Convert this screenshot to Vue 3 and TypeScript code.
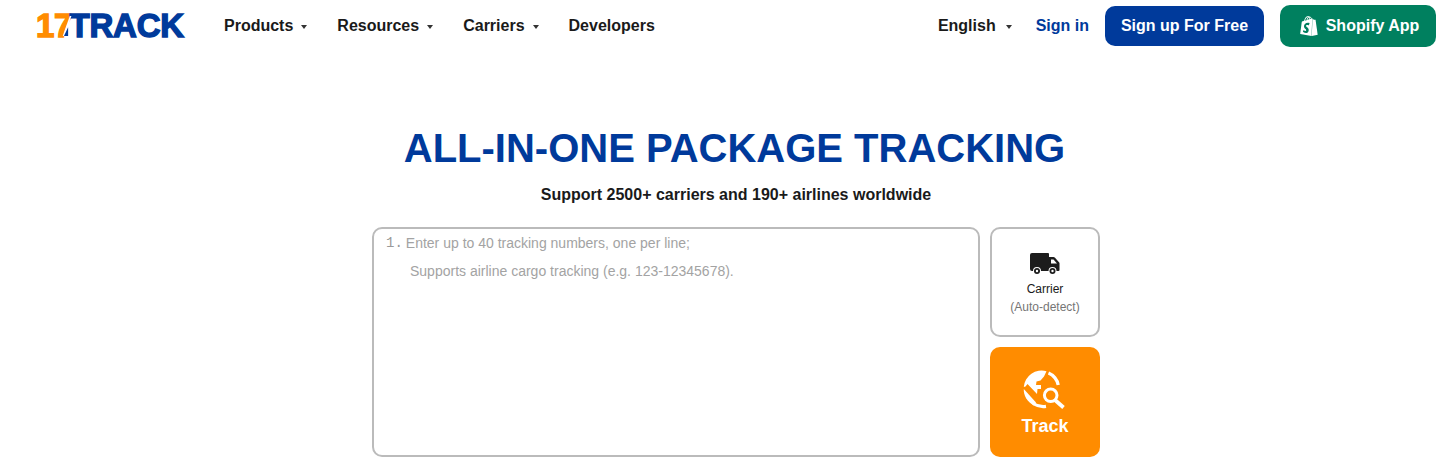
<script setup lang="ts">
const navItems: { label: string; caret: boolean }[] = [
  { label: 'Products', caret: true },
  { label: 'Resources', caret: true },
  { label: 'Carriers', caret: true },
  { label: 'Developers', caret: false },
]
</script>

<template>
  <div class="page">
    <header class="header">
      <a class="logo"><span class="l17">17</span><svg class="slash" width="15" height="24" viewBox="0 0 15 24"><path d="M13 0h2L7 24H4.500z" fill="#fff"/><path d="M6 24h5V13.500z" fill="#003a9b"/></svg><span class="ltrack">TRACK</span></a>
      <nav class="nav">
        <a v-for="item in navItems" :key="item.label" class="nav-item">
          {{ item.label }}<i v-if="item.caret" class="caret"></i>
        </a>
      </nav>
      <div class="right">
        <a class="lang">English<i class="caret"></i></a>
        <a class="signin">Sign in</a>
        <a class="btn signup">Sign up For Free</a>
        <a class="btn shopify">
          <svg width="20" height="20" viewBox="0 0 24 24"><path fill="#fff" d="M15.337 23.979l7.216-1.561s-2.604-17.613-2.625-17.730c-.018-.116-.114-.192-.211-.192s-1.929-.136-1.929-.136-1.275-1.274-1.439-1.411c-.045-.037-.075-.057-.121-.074l-.914 21.104h.023zM11.710 11.305s-.810-.424-1.774-.424c-1.447 0-1.504.906-1.504 1.141 0 1.232 3.240 1.715 3.240 4.629 0 2.295-1.440 3.760-3.406 3.760-2.354 0-3.540-1.465-3.540-1.465l.646-2.086s1.245 1.066 2.280 1.066c.675 0 .975-.545.975-.932 0-1.619-2.654-1.694-2.654-4.359-.034-2.237 1.571-4.416 4.827-4.416 1.257 0 1.875.361 1.875.361l-.945 2.715-.020.010zM11.170.830c.136 0 .271.038.405.135-.984.465-2.064 1.639-2.508 3.992-.656.213-1.293.405-1.889.578C7.697 3.750 8.951.840 11.170.840V.830zm1.235 2.949v.135c-.754.232-1.583.484-2.394.736.466-1.777 1.333-2.645 2.085-2.971.193.501.309 1.176.309 2.100zm.539-2.234c.694.074 1.141.867 1.429 1.755-.349.114-.735.231-1.158.366v-.252c0-.752-.096-1.371-.271-1.871v.002zm2.992 1.289c-.020 0-.060.021-.078.021s-.289.075-.714.210c-.423-1.233-1.176-2.370-2.508-2.370h-.115C12.135.209 11.669 0 11.265 0 8.159 0 6.675 3.877 6.210 5.846c-1.194.365-2.063.636-2.160.674-.675.213-.694.232-.772.870-.075.462-1.830 14.063-1.830 14.063L15.009 24l.927-21.166z"/></svg>
          Shopify App
        </a>
      </div>
    </header>

    <main class="main">
      <h1 class="title">ALL-IN-ONE PACKAGE TRACKING</h1>
      <p class="sub">Support 2500+ carriers and 190+ airlines worldwide</p>
      <section class="tracker">
        <div class="input-box">
          <div class="line first"><span class="num">1.</span><span>Enter up to 40 tracking numbers, one per line;</span></div>
          <div class="line second">Supports airline cargo tracking (e.g. 123-12345678).</div>
        </div>
        <div class="side">
          <button class="carrier">
            <svg width="30" height="22" viewBox="0 0 30 22"><path fill="#1c1c1c" d="M0 2a2 2 0 0 1 2-2h16a1 1 0 0 1 1 1v3h4.500c.6 0 1.100.2 1.500.7l4 4.600c.3.300.5.800.5 1.200V17a1 1 0 0 1-1 1h-2a4 4 0 0 0-8 0H11a4 4 0 0 0-8 0H2a2 2 0 0 1-2-2z"/><path fill="#fff" d="M21 6.500h2.500l3.500 4h-6z"/><circle cx="7" cy="18" r="3" fill="#1c1c1c"/><circle cx="7" cy="18" r="1.200" fill="#fff"/><circle cx="22.500" cy="18" r="3" fill="#1c1c1c"/><circle cx="22.500" cy="18" r="1.200" fill="#fff"/></svg>
            <span class="c1">Carrier</span>
            <span class="c2">(Auto-detect)</span>
          </button>
          <button class="track">
            <svg width="44" height="42" viewBox="0 0 44 42">
              <path fill="#fff" d="M.8 17A17.800 17.800 0 0 1 23.500 1.200L21 6.500 17.500 10.500 13.500 11.500 13 15H18V19H14.500L14 24 4.500 14 2.500 16.500z"/>
              <path fill="#fff" d="M.8 19 13 32.500l-2 3C4 32 .4 25 .8 19z"/>
              <path fill="none" stroke="#fff" stroke-width="3.200" d="M10 33.500C14 36 18.500 37 23 36.300"/>
              <path fill="none" stroke="#fff" stroke-width="3.200" d="M25.500 3C30.500 5 34.500 10 35.200 15"/>
              <circle cx="27.700" cy="25.300" r="10" fill="#ff8c00"/>
              <path fill="#fff" d="M14.500 15H18v4h-3.500z"/>
              <circle cx="27.700" cy="25.300" r="6.300" fill="none" stroke="#fff" stroke-width="3"/>
              <path stroke="#fff" stroke-width="3.800" d="M32 30l8.500 7.500"/>
            </svg>
            <span>Track</span>
          </button>
        </div>
      </section>
    </main>
  </div>
</template>

<style>
html, body { margin: 0; padding: 0; background: #fff; overflow: hidden; }
</style>

<style scoped>
.page {
  width: 1444px;
  height: 464px;
  overflow: hidden;
  font-family: "Liberation Sans", Arial, sans-serif;
  color: #1a1a1a;
}
.header {
  display: flex;
  align-items: center;
  height: 52px;
  padding: 0 8px 0 36px;
}
.logo {
  display: flex;
  align-items: center;
  width: 148px;
  height: 24px;
  font-size: 33px;
  font-weight: 700;
  line-height: 24px;
  -webkit-text-stroke: 1.400px currentColor;
}
.l17 { color: #ff8c00; letter-spacing: -0.3px; }
.slash { margin: 0 -2px 0 -13px; position: relative; z-index: 1; }
.ltrack { color: #003a9b; letter-spacing: -0.2px; }
.nav { display: flex; gap: 30px; margin-left: 40px; }
.nav-item, .lang {
  display: flex;
  align-items: center;
  font-size: 16px;
  font-weight: 700;
  color: #1a1a1a;
}
.caret {
  width: 0;
  height: 0;
  margin-left: 8px;
  margin-top: 2px;
  border-left: 3.500px solid transparent;
  border-right: 3.500px solid transparent;
  border-top: 4px solid #333;
}
.right { display: flex; align-items: center; margin-left: auto; }
.lang .caret { margin-left: 10px; }
.signin { margin-left: 24px; font-size: 16px; font-weight: 700; color: #003a9b; }
.btn {
  display: flex;
  align-items: center;
  justify-content: center;
  box-sizing: border-box;
  border-radius: 10px;
  color: #fff;
  font-size: 16px;
  font-weight: 700;
}
.signup { width: 159px; height: 40px; margin-left: 16px; background: #003a9b; }
.shopify { width: 156px; height: 42px; margin-left: 16px; padding-left: 2px; gap: 7px; background: #00805f; }
.main { display: flex; flex-direction: column; align-items: center; padding-left: 28px; }
.title {
  margin: 75px 0 0 -3px;
  font-size: 40px;
  line-height: 42px;
  font-weight: 700;
  color: #003a9b;
  white-space: nowrap;
}
.sub {
  margin: 16px 0 0 0;
  font-size: 16px;
  line-height: 20px;
  font-weight: 700;
  color: #1a1a1a;
}
.tracker { display: flex; gap: 10px; margin: 22px 0 0 0; }
.input-box {
  box-sizing: border-box;
  width: 608px;
  height: 230px;
  border: 2px solid #bbb;
  border-radius: 10px;
  padding: 4px 0 0 12px;
  font-size: 14px;
  color: #a3a3a3;
}
.line { line-height: 20px; }
.first { display: flex; gap: 3px; }
.num { font-family: "Liberation Mono", monospace; font-size: 14px; color: #999; }
.second { margin: 8px 0 0 24px; }
.side { display: flex; flex-direction: column; gap: 10px; }
.carrier, .track {
  display: flex;
  flex-direction: column;
  align-items: center;
  box-sizing: border-box;
  width: 110px;
  height: 110px;
  padding: 0;
  border-radius: 10px;
  font-family: inherit;
}
.carrier { border: 2px solid #bbb; background: #fff; padding-top: 24px; }
.c1 { margin-top: 5px; font-size: 12px; line-height: 18px; color: #1a1a1a; }
.c2 { font-size: 12px; line-height: 18px; color: #757575; }
.track {
  border: none;
  background: #ff8c00;
  color: #fff;
  font-size: 18px;
  font-weight: 700;
  padding-top: 23px;
}
.track span { margin-top: 3px; line-height: 22px; }
</style>
